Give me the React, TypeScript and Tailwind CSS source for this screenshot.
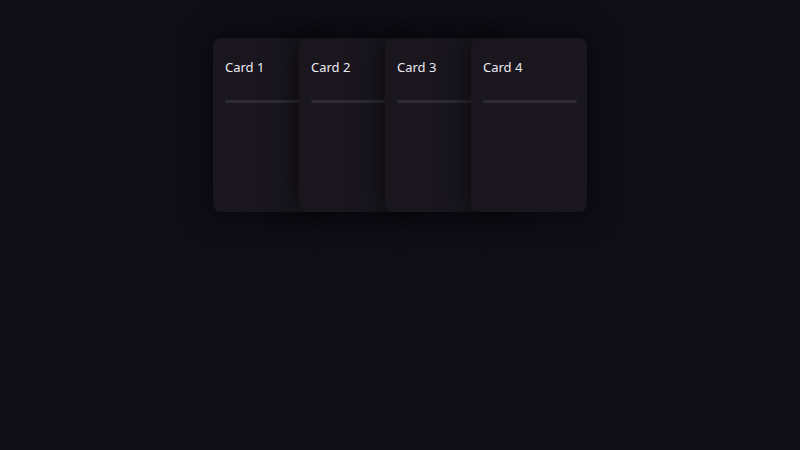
import React from "react";

const cards = ["Card 1", "Card 2", "Card 3", "Card 4"];

export default function App() {
  return (
    <div
      className="w-[800px] h-[450px] bg-[#0f0e17] flex justify-center pt-[38px]"
      style={{ fontFamily: '"Noto Sans", "Open Sans", sans-serif' }}
    >
      <div className="flex h-[174px]">
        {cards.map((title, i) => (
          <div
            key={title}
            className={`w-[116px] h-[174px] shrink-0 rounded-lg bg-[#19161e] shadow-[0_0_32px_rgba(0,0,0,0.7)] pl-3 pr-[10px] pt-[19px] ${
              i > 0 ? "ml-[-30px]" : ""
            }`}
          >
            <div className="text-[13px] leading-[20px] text-[#ece9f1]">{title}</div>
            <div className="mt-[23px] h-[3px] rounded-full bg-[#2e2b34]" />
          </div>
        ))}
      </div>
    </div>
  );
}
